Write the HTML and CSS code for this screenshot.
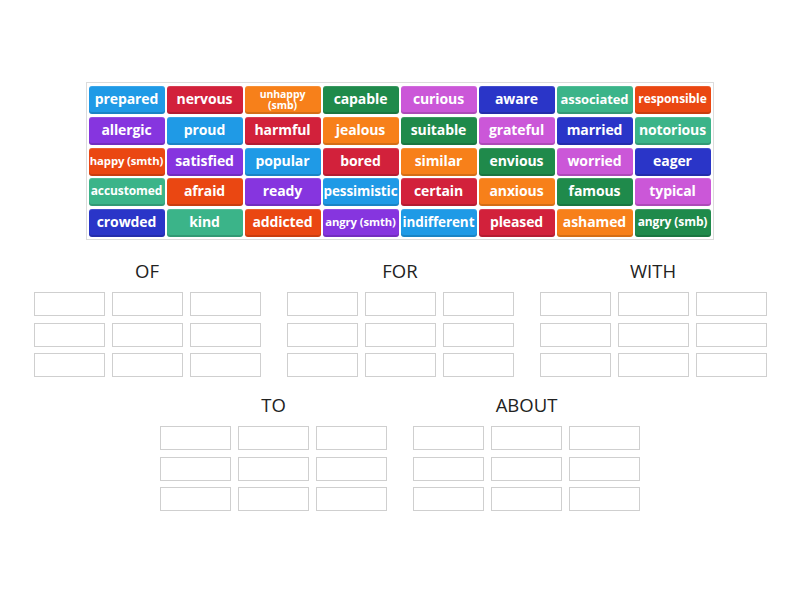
FILE: index.html
```html
<!DOCTYPE html>
<html>
<head>
<meta charset="utf-8">
<link rel="stylesheet" href="styles.css">
</head>
<body>
<div class="page">
  <div class="bank">
    <div class="tile c-lb">prepared</div>
    <div class="tile c-rd">nervous</div>
    <div class="tile c-or two"><span>unhappy</span><span>(smb)</span></div>
    <div class="tile c-dg">capable</div>
    <div class="tile c-pk">curious</div>
    <div class="tile c-db">aware</div>
    <div class="tile c-tl s13">associated</div>
    <div class="tile c-ro s12">responsible</div>

    <div class="tile c-pu">allergic</div>
    <div class="tile c-lb">proud</div>
    <div class="tile c-rd">harmful</div>
    <div class="tile c-or">jealous</div>
    <div class="tile c-dg">suitable</div>
    <div class="tile c-pk">grateful</div>
    <div class="tile c-db">married</div>
    <div class="tile c-tl">notorious</div>

    <div class="tile c-ro s11">happy (smth)</div>
    <div class="tile c-pu">satisfied</div>
    <div class="tile c-lb">popular</div>
    <div class="tile c-rd">bored</div>
    <div class="tile c-or">similar</div>
    <div class="tile c-dg">envious</div>
    <div class="tile c-pk">worried</div>
    <div class="tile c-db">eager</div>

    <div class="tile c-tl s12">accustomed</div>
    <div class="tile c-ro">afraid</div>
    <div class="tile c-pu">ready</div>
    <div class="tile c-lb s135">pessimistic</div>
    <div class="tile c-rd">certain</div>
    <div class="tile c-or">anxious</div>
    <div class="tile c-dg">famous</div>
    <div class="tile c-pk">typical</div>

    <div class="tile c-db">crowded</div>
    <div class="tile c-tl">kind</div>
    <div class="tile c-ro">addicted</div>
    <div class="tile c-pu s11">angry (smth)</div>
    <div class="tile c-lb s135">indifferent</div>
    <div class="tile c-rd">pleased</div>
    <div class="tile c-or">ashamed</div>
    <div class="tile c-dg s12">angry (smb)</div>
  </div>

  <div class="groups row1">
    <div class="group">
      <div class="title">OF</div>
      <div class="boxes"><div></div><div></div><div></div><div></div><div></div><div></div><div></div><div></div><div></div></div>
    </div>
    <div class="group">
      <div class="title">FOR</div>
      <div class="boxes"><div></div><div></div><div></div><div></div><div></div><div></div><div></div><div></div><div></div></div>
    </div>
    <div class="group">
      <div class="title">WITH</div>
      <div class="boxes"><div></div><div></div><div></div><div></div><div></div><div></div><div></div><div></div><div></div></div>
    </div>
  </div>

  <div class="groups row2">
    <div class="group">
      <div class="title">TO</div>
      <div class="boxes"><div></div><div></div><div></div><div></div><div></div><div></div><div></div><div></div><div></div></div>
    </div>
    <div class="group">
      <div class="title">ABOUT</div>
      <div class="boxes"><div></div><div></div><div></div><div></div><div></div><div></div><div></div><div></div><div></div></div>
    </div>
  </div>
</div>
</body>
</html>
```

FILE: styles.css
```css
html, body {
  margin: 0;
  padding: 0;
  background: #ffffff;
}
body {
  font-family: "Open Sans", "Liberation Sans", sans-serif;
  width: 800px;
  height: 600px;
  overflow: hidden;
}
.page {
  padding-top: 82px;
  display: flex;
  flex-direction: column;
  align-items: center;
}
.bank {
  border: 1px solid #dcdcdc;
  padding: 3px 2px 2px 2px;
  display: grid;
  grid-template-columns: repeat(8, 76px);
  grid-auto-rows: 28px;
  column-gap: 2px;
  row-gap: 2.75px;
  margin-left: -1px;
}
.tile {
  border-radius: 3px;
  color: #ffffff;
  font-weight: 700;
  font-size: 14px;
  line-height: 16px;
  display: flex;
  align-items: center;
  justify-content: center;
  text-align: center;
  white-space: nowrap;
  box-shadow: inset 0 -2px 0 rgba(0, 0, 0, 0.14), inset 0 1px 0 rgba(255, 255, 255, 0.12);
  padding-bottom: 2px;
  box-sizing: border-box;
  letter-spacing: -0.1px;
}
.tile.s13 { font-size: 13px; }
.tile.s135 { font-size: 13.5px; }
.tile.s12 { font-size: 12px; }
.tile.s11 { font-size: 11.3px; }
.tile.two {
  flex-direction: column;
  font-size: 10.5px;
  line-height: 11px;
  padding-bottom: 1px;
}
.tile.two span {
  display: block;
  height: 11px;
}

.c-lb { background: #1f9ae6; }
.c-rd { background: #d2213b; }
.c-or { background: #f7801a; }
.c-dg { background: #1f8a4b; }
.c-pk { background: #cb57d8; }
.c-db { background: #2a35c8; }
.c-tl { background: #3bb489; }
.c-ro { background: #ea4712; }
.c-pu { background: #8635df; }

.groups {
  display: flex;
  gap: 26px;
}
.row1 { margin-top: 19px; }
.row2 { margin-top: 16px; }
.group {
  display: flex;
  flex-direction: column;
  align-items: center;
}
.title {
  font-size: 18.5px;
  line-height: 24px;
  color: #222222;
  margin-bottom: 9px;
}
.boxes {
  display: grid;
  grid-template-columns: repeat(3, 71px);
  grid-auto-rows: 24px;
  column-gap: 7px;
  row-gap: 6.5px;
}
.boxes div {
  border: 1px solid #cfcfcf;
  box-sizing: border-box;
  background: #ffffff;
}
```
